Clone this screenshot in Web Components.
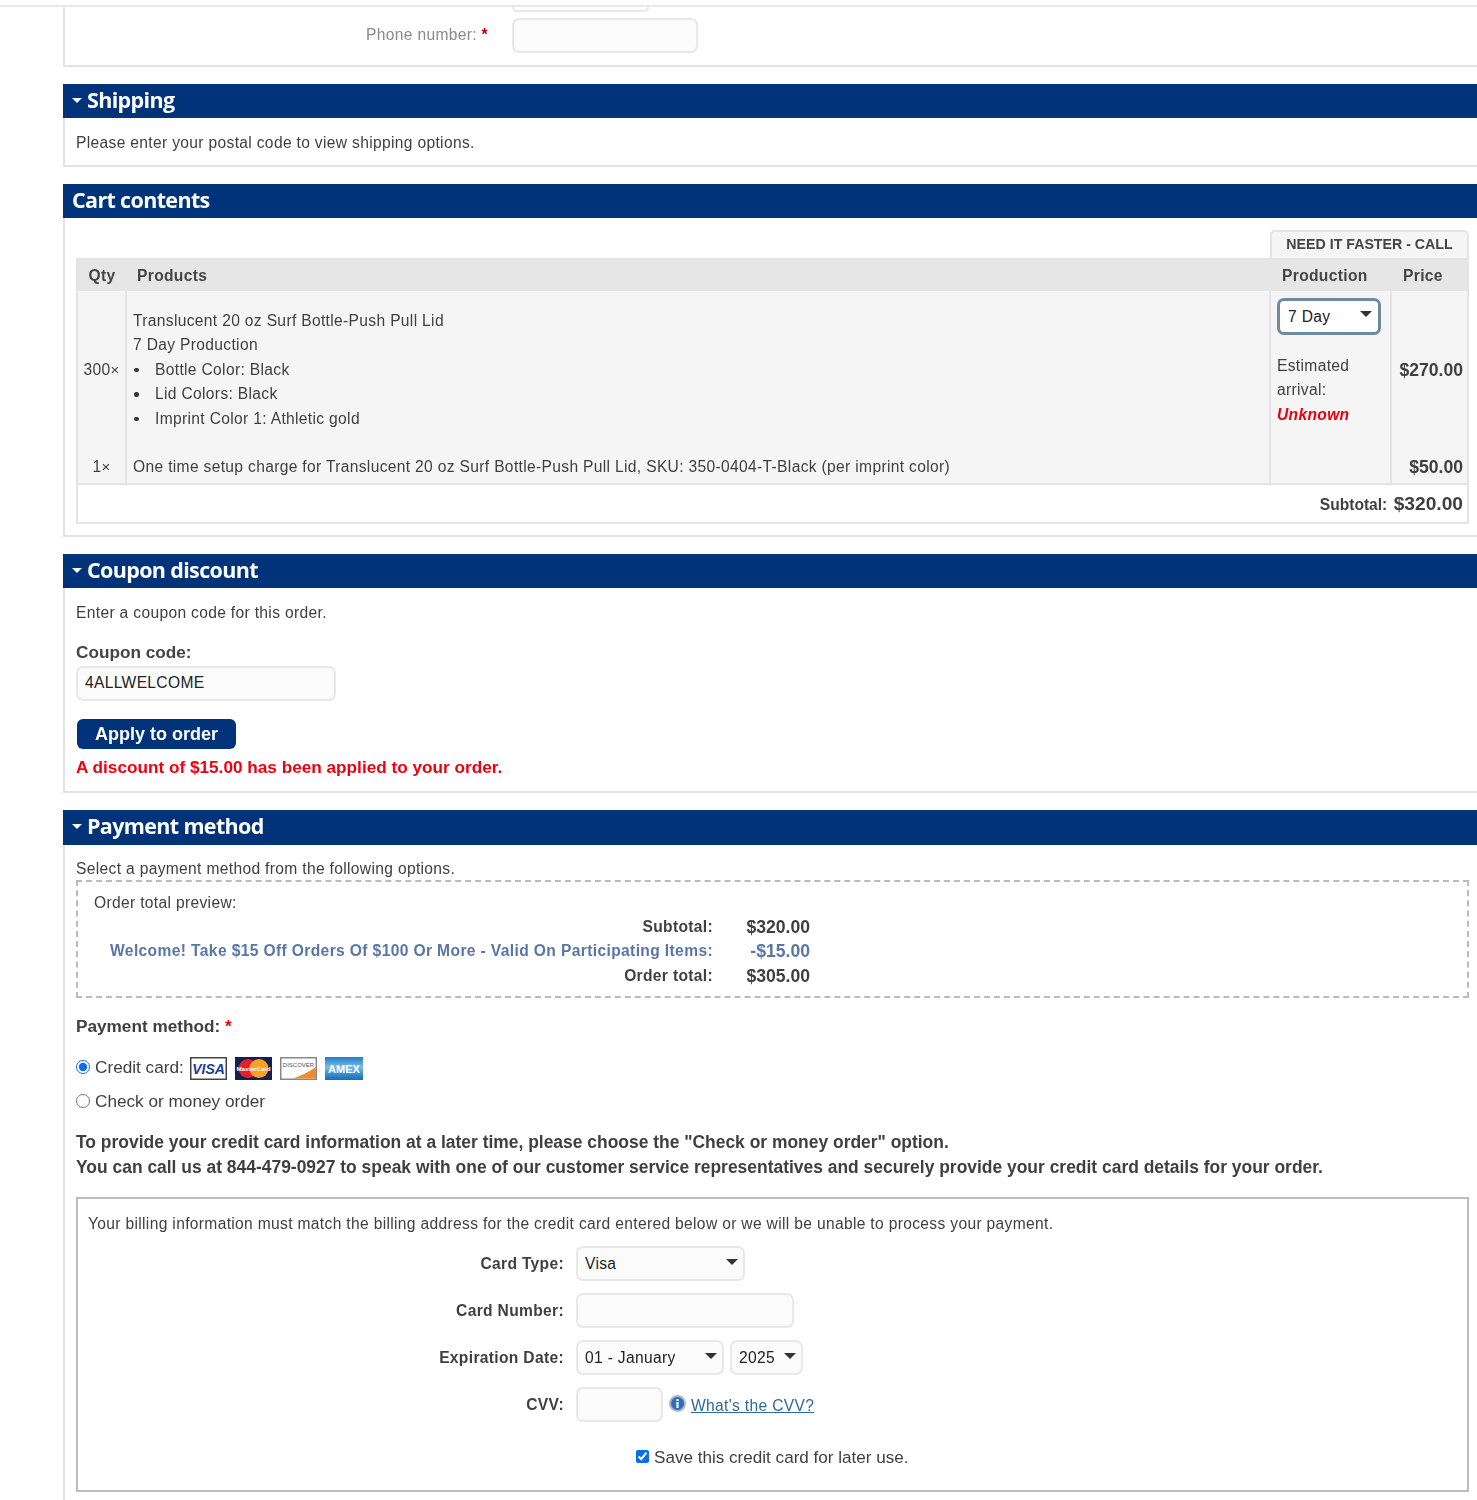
<!DOCTYPE html>
<html>
<head>
<meta charset="utf-8">
<title>Checkout</title>
<style>
html,body{margin:0;padding:0;background:#fff;}
body{font:15.6px/24.5px "Liberation Sans",Arial,sans-serif;letter-spacing:.33px;color:#3f3f3f;overflow-x:hidden;}
</style>
</head>
<body>
<checkout-page>
  <check-panel plain>
    <div style="height:5px"><div style="margin-left:447px;width:133px;height:3px;border:2px solid #e8e8e8;border-top:0;border-radius:0 0 7px 7px;"></div></div>
    <phone-row></phone-row>
  </check-panel>

  <check-panel heading="Shipping" arrow>
    <p style="margin:0;padding:13px 0 9px 11px;">Please enter your postal code to view shipping options.</p>
  </check-panel>

  <check-panel heading="Cart contents">
    <cart-table></cart-table>
  </check-panel>

  <check-panel heading="Coupon discount" arrow>
    <coupon-form></coupon-form>
  </check-panel>

  <check-panel heading="Payment method" arrow tall>
    <payment-form></payment-form>
  </check-panel>
</checkout-page>

<script>
//============= HELPER =========================//
function makeTemplate(html){
  const t = document.createElement('template');
  t.innerHTML = html;
  return t;
}
class ShadowEl extends HTMLElement{
  constructor(tpl){
    super();
    this.attachShadow({mode:'open'});
    this.shadowRoot.appendChild(tpl.content.cloneNode(true));
  }
}

//============= PAGE =========================//
const pageTpl = makeTemplate(`
<style>
:host{display:block;padding-left:63px;border-top:2px solid #e8e8e8;margin-top:5px;filter:blur(.3px);}
</style>
<slot></slot>`);
customElements.define('checkout-page', class extends ShadowEl{
  constructor(){ super(pageTpl); }
});

//============= PANEL =========================//
const panelTpl = makeTemplate(`
<style>
:host{display:block;margin-bottom:17px;}
:host([tall]){margin-bottom:0;}
header{display:flex;align-items:center;gap:5px;box-sizing:border-box;height:34px;padding:0 0 2px 9px;background:#00337a;color:#fff;
  font:700 21.5px/32px "Open Sans","Noto Sans",sans-serif;letter-spacing:-.65px;}
:host([tall]) header{height:35px;}
.arrow{width:0;height:0;border:5px solid transparent;border-top-color:#fff;border-bottom:0;margin-top:1px;}
.body{border-left:2px solid #e2e2e2;border-bottom:2px solid #e2e2e2;}
</style>
<header><span class="arrow"></span><span class="title"></span></header>
<div class="body"><slot></slot></div>`);
customElements.define('check-panel', class extends ShadowEl{
  constructor(){ super(panelTpl); }
  connectedCallback(){
    const root = this.shadowRoot;
    if(this.hasAttribute('plain')) root.querySelector('header').remove();
    else{
      root.querySelector('.title').textContent = this.getAttribute('heading');
      if(!this.hasAttribute('arrow')) root.querySelector('.arrow').remove();
    }
    if(this.hasAttribute('tall')) root.querySelector('.body').style.borderBottom = '0';
  }
});

//============= FIELDS =========================//
const boxTpl = makeTemplate(`
<style>
:host{display:inline-flex;align-items:center;box-sizing:border-box;height:35px;padding:0 7px;background:#fbfbfb;
  border:2px solid #e8e8e8;border-radius:7px;color:#222;position:relative;vertical-align:top;}
:host([arrow]){padding-top:2px;}
:host([arrow])::after{content:"";position:absolute;right:5px;top:11px;border:6px solid transparent;border-top:6px solid #333;border-bottom:0;}
:host([focus]){background:#fff;border:3px solid #6d8aa0;padding:3px 8px 0;height:37px;}
:host([focus])::after{right:6px;top:10px;}
</style>
<slot></slot>`);
customElements.define('field-box', class extends ShadowEl{
  constructor(){ super(boxTpl); }
});

const phoneTpl = makeTemplate(`
<style>
:host{display:grid;grid-template-columns:423px 1fr;column-gap:24px;align-items:center;height:53px;padding-bottom:7px;box-sizing:border-box;}
label{text-align:right;color:#8a8a8a;}
b{color:#b00;}
field-box{width:186px;display:flex;}
</style>
<label>Phone number: <b>*</b></label>
<div><field-box></field-box></div>`);
customElements.define('phone-row', class extends ShadowEl{
  constructor(){ super(phoneTpl); }
});

//============= CART =========================//
const cartTpl = makeTemplate(`
<style>
:host{display:block;padding:12px 8px 11px 11px;}
.tab{box-sizing:border-box;width:199px;height:28px;margin-left:auto;background:#f5f5f5;border:2px solid #e4e4e4;border-bottom:0;
  border-radius:5px 5px 0 0;text-align:center;font-weight:700;font-size:14.2px;line-height:24px;letter-spacing:0;color:#444;}
table{width:100%;border-collapse:collapse;table-layout:fixed;border:2px solid #e4e4e4;}
th{background:#e6e6e6;height:28px;padding:3px 0 0;font-weight:700;color:#444;text-align:left;}
td{padding:0;background:#f5f5f5;vertical-align:top;}
.qty{text-align:center;vertical-align:middle;border-right:2px solid #e4e4e4;}
.prod{padding-left:6px;}
.prod-top{padding-top:18px;padding-bottom:19px;}
.prod ul{margin:0;padding:0;list-style:none;}
.prod li{padding-left:22px;position:relative;}
.prod li::before{content:"";position:absolute;left:1px;top:10px;width:4.5px;height:4.5px;border-radius:50%;background:#333;}
.timing{border-left:2px solid #e4e4e4;border-right:2px solid #e4e4e4;padding:7px 0 0 6px;box-sizing:border-box;}
.timing p{margin:0;padding-top:19px;width:90px;}
.timing em{color:#e8000d;font-weight:700;}
.price{text-align:right;padding-right:4px;box-sizing:border-box;font-weight:700;font-size:17.6px;letter-spacing:0;}
.price.top{padding-top:67px;}
.last td{height:28px;padding-top:5px;}
.last .qty{vertical-align:top;}
.sub td{background:#fff;height:35px;padding:2px 4px 0 0;border-top:2px solid #e4e4e4;text-align:right;font-weight:700;letter-spacing:0;vertical-align:middle;}
.sub span{font-size:19.2px;font-weight:700;margin-left:2px;}
th.q{text-align:center;}
th.p{padding-left:11px;}
th.r{padding-left:12px;}
.x{font-size:15px;}
field-box{width:104px;display:flex;}
</style>
<div class="tab">NEED IT FASTER - CALL</div>
<table>
  <colgroup><col style="width:49px"><col><col style="width:121px"><col style="width:77px"></colgroup>
  <tr><th class="q">Qty</th><th class="p">Products</th><th class="r">Production</th><th class="r">Price</th></tr>
  <tr>
    <td class="qty">300<span class="x">×</span></td>
    <td class="prod prod-top">
      Translucent 20 oz Surf Bottle-Push Pull Lid<br>7 Day Production
      <ul><li>Bottle Color: Black</li><li>Lid Colors: Black</li><li>Imprint Color 1: Athletic gold</li></ul>
    </td>
    <td class="timing" rowspan="2">
      <field-box focus arrow>7 Day</field-box>
      <p>Estimated arrival:<br><em>Unknown</em></p>
    </td>
    <td class="price top">$270.00</td>
  </tr>
  <tr class="last">
    <td class="qty">1<span class="x">×</span></td>
    <td class="prod">One time setup charge for Translucent 20 oz Surf Bottle-Push Pull Lid, SKU: 350-0404-T-Black (per imprint color)</td>
    <td class="price">$50.00</td>
  </tr>
  <tr class="sub"><td colspan="4">Subtotal: <span>$320.00</span></td></tr>
</table>`);
customElements.define('cart-table', class extends ShadowEl{
  constructor(){ super(cartTpl); }
});

//============= COUPON =========================//
const couponTpl = makeTemplate(`
<style>
:host{display:block;padding:13px 0 11px 11px;}
p{margin:0;}
.lab{margin-top:14px;font-size:17.2px;font-weight:700;letter-spacing:0;color:#444;}
field-box{width:260px;margin-top:2px;display:flex;}
button{display:block;margin:18px 0 0 1px;width:159px;height:30px;padding:0;border:0;border-radius:6px;background:#00337a;color:#fff;
  font:700 18px/30px "Liberation Sans",Arial,sans-serif;}
.msg{margin-top:6px;color:#f0000f;font-weight:700;font-size:17.2px;letter-spacing:0;}
</style>
<p>Enter a coupon code for this order.</p>
<p class="lab">Coupon code:</p>
<field-box>4ALLWELCOME</field-box>
<button>Apply to order</button>
<p class="msg">A discount of $15.00 has been applied to your order.</p>`);
customElements.define('coupon-form', class extends ShadowEl{
  constructor(){ super(couponTpl); }
});

//============= CARD ICONS =========================//
const cardArt = {
  visa:`<rect x=".75" y=".75" width="35.5" height="21.5" fill="#fff" stroke="#444" stroke-width="1.5"/>
    <text x="18.5" y="17" text-anchor="middle" font-family="Liberation Sans" font-weight="700" font-style="italic" font-size="14" letter-spacing="0" fill="#1a3d8f">VISA</text>`,
  master:`<rect width="37" height="23" fill="#14214d"/><circle cx="13" cy="11.5" r="9.5" fill="#e5202c"/><circle cx="24" cy="11.5" r="9.5" fill="#f5a227"/>
    <text x="18.5" y="14" text-anchor="middle" font-family="Liberation Sans" font-weight="700" font-size="6.2" letter-spacing="0" fill="#fff">MasterCard</text>`,
  discover:`<rect x=".75" y=".75" width="35.5" height="21.5" fill="#fff" stroke="#888" stroke-width="1.5"/>
    <path d="M13 21.5 L36 21.5 L36 10 Q24 18 13 21.5Z" fill="#ef8a30"/>
    <text x="18.5" y="9.5" text-anchor="middle" font-family="Liberation Sans" font-size="6" letter-spacing="0" fill="#555">DISCOVER</text>`,
  amex:`<defs><linearGradient id="ax" x1="0" y1="0" x2="0" y2="1"><stop offset="0" stop-color="#1f7fc6"/><stop offset=".45" stop-color="#7cbbe8"/><stop offset=".7" stop-color="#3d93d4"/><stop offset="1" stop-color="#136fb4"/></linearGradient></defs>
    <rect width="38" height="23" fill="url(#ax)"/>
    <text x="19" y="16" text-anchor="middle" font-family="Liberation Sans" font-weight="700" font-size="11" letter-spacing="0" fill="#fff">AMEX</text>`
};
const cardTpl = makeTemplate(`<style>:host{display:inline-block;line-height:0;} svg{display:block;}</style><svg xmlns="http://www.w3.org/2000/svg"></svg>`);
customElements.define('card-icon', class extends ShadowEl{
  constructor(){ super(cardTpl); }
  connectedCallback(){
    const svg = this.shadowRoot.querySelector('svg');
    const w = this.getAttribute('w') || 37;
    svg.setAttribute('width', w);
    svg.setAttribute('height', 23);
    svg.setAttribute('viewBox', '0 0 ' + w + ' 23');
    svg.innerHTML = cardArt[this.getAttribute('kind')];
  }
});

//============= ORDER PREVIEW =========================//
const previewTpl = makeTemplate(`
<style>
:host{display:block;box-sizing:border-box;height:118px;margin:-1px 8px 0 0;border:2px dashed #bbb;padding:9px 0 0 16px;}
.grid{display:grid;grid-template-columns:619px 97px;font-weight:700;line-height:24.6px;}
.grid span{text-align:right;}
.grid .v{font-size:17.6px;letter-spacing:0;}
.blue{color:#5a76a6;letter-spacing:.37px;}
.title{margin-bottom:-1px;}
</style>
<div class="title">Order total preview:</div>
<div class="grid">
  <span>Subtotal:</span><span class="v">$320.00</span>
  <span class="blue">Welcome! Take $15 Off Orders Of $100 Or More - Valid On Participating Items:</span><span class="v blue">-$15.00</span>
  <span>Order total:</span><span class="v">$305.00</span>
</div>`);
customElements.define('order-preview', class extends ShadowEl{
  constructor(){ super(previewTpl); }
});

//============= BILLING =========================//
const billRowTpl = makeTemplate(`
<style>
:host{display:grid;grid-template-columns:476px 1fr;column-gap:12px;align-items:center;height:35px;margin-bottom:12px;}
label{text-align:right;font-weight:700;padding-top:2px;}
.f{display:flex;gap:6px;align-items:center;}
</style>
<label></label><div class="f"><slot></slot></div>`);
customElements.define('bill-row', class extends ShadowEl{
  constructor(){ super(billRowTpl); }
  connectedCallback(){ this.shadowRoot.querySelector('label').textContent = this.getAttribute('label'); }
});

const infoTpl = makeTemplate(`
<style>:host{display:inline-block;line-height:0;margin:-3px 0 0 0;}</style>
<svg width="17" height="17" viewBox="0 0 17 17"><circle cx="8.5" cy="8.5" r="7.5" fill="#2f6db5" stroke="#a9b8c6" stroke-width="2"/><rect x="7.4" y="4" width="2.2" height="2" fill="#fff"/><rect x="7.4" y="7" width="2.2" height="6" fill="#fff"/></svg>`);
customElements.define('info-icon', class extends ShadowEl{
  constructor(){ super(infoTpl); }
});

const billingTpl = makeTemplate(`
<style>
:host{display:block;box-sizing:border-box;height:295px;margin:0 8px 0 0;border:2px solid #bdbdbd;padding:13px 0 0 10px;}
.intro{margin-bottom:10px;}
a{color:#2c6a9c;text-decoration:underline;margin:3px 0 0 -1px;}
.save{display:flex;align-items:center;margin:24px 0 0 548px;font-size:17.1px;letter-spacing:0;}
input{accent-color:#0a6ee8;width:13px;height:13px;margin:-3px 5px 0 0;}
.w1{width:169px;}.w2{width:218px;}.w3{width:148px;}.w4{width:73px;}.w5{width:87px;}
</style>
<div class="intro">Your billing information must match the billing address for the credit card entered below or we will be unable to process your payment.</div>
<bill-row label="Card Type:"><field-box class="w1" arrow>Visa</field-box></bill-row>
<bill-row label="Card Number:"><field-box class="w2"></field-box></bill-row>
<bill-row label="Expiration Date:"><field-box class="w3" arrow>01 - January</field-box><field-box class="w4" arrow>2025</field-box></bill-row>
<bill-row label="CVV:"><field-box class="w5"></field-box><info-icon></info-icon><a href="#">What's the CVV?</a></bill-row>
<div class="save"><input type="checkbox" checked><span>Save this credit card for later use.</span></div>`);
customElements.define('billing-box', class extends ShadowEl{
  constructor(){ super(billingTpl); }
});

//============= PAYMENT =========================//
const payTpl = makeTemplate(`
<style>
:host{display:block;padding:12px 0 20px 11px;}
p{margin:0;}
.lab{margin-top:16px;font-size:17.2px;font-weight:700;letter-spacing:0;}
.opts{margin-top:12px;font-size:17.2px;letter-spacing:0;}
.opt{display:flex;align-items:center;height:34px;}
.opt input{accent-color:#0a6ee8;width:14px;height:14px;margin:-2px 5px 0 0;}
.cards{display:flex;gap:8px;margin:1px 0 0 6px;}
.note{margin-top:11.5px;font-size:17.46px;font-weight:700;letter-spacing:0;line-height:24.6px;}
billing-box{margin-top:17.5px;}
</style>
<p>Select a payment method from the following options.</p>
<order-preview></order-preview>
<p class="lab">Payment method: <span style="color:#e00">*</span></p>
<div class="opts">
  <label class="opt"><input type="radio" name="pay" checked>Credit card:
    <span class="cards"><card-icon kind="visa" w="37"></card-icon><card-icon kind="master"></card-icon><card-icon kind="discover" w="37"></card-icon><card-icon kind="amex" w="38"></card-icon></span></label>
  <label class="opt"><input type="radio" name="pay">Check or money order</label>
</div>
<p class="note">To provide your credit card information at a later time, please choose the "Check or money order" option.<br>
You can call us at 844-479-0927 to speak with one of our customer service representatives and securely provide your credit card details for your order.</p>
<billing-box></billing-box>`);
customElements.define('payment-form', class extends ShadowEl{
  constructor(){ super(payTpl); }
});
</script>
</body>
</html>
